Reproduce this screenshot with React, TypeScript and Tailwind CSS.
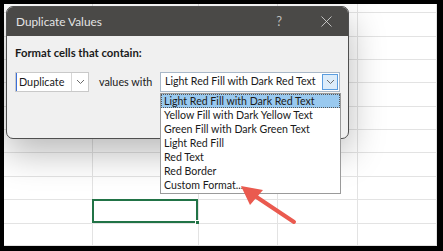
import { X } from 'lucide-react'

const colWidths = [89, 106, 79, 80, 79]
const rowHeights = [9, 24, 23, 23, 24, 23, 23, 24, 23, 24, 22]

const listItems = [
  'Light Red Fill with Dark Red Text',
  'Yellow Fill with Dark Yellow Text',
  'Green Fill with Dark Green Text',
  'Light Red Fill',
  'Red Text',
  'Red Border',
  'Custom Format...',
]

function Chevron() {
  return (
    <svg width="9" height="6" viewBox="0 0 9 6" fill="none">
      <polyline points="1,1 4.5,4.5 8,1" stroke="#6b6b6b" strokeWidth="1" />
    </svg>
  )
}

function Sheet() {
  return (
    <div className="flex h-full w-full flex-col bg-white">
      {rowHeights.map((h, r) => (
        <div key={r} className="flex shrink-0" style={{ height: h }}>
          {colWidths.map((w, c) => (
            <div
              key={c}
              className="relative shrink-0 border-r border-b border-[#e3e3e3]"
              style={{ width: w }}
            >
              {r === 9 && c === 1 && (
                <div className="absolute top-[-1px] right-0 bottom-0 left-[-1px] border-2 border-[#217346]">
                  <div className="absolute right-[-4px] bottom-[-4px] h-[5px] w-[5px] border border-white bg-[#217346]" />
                </div>
              )}
            </div>
          ))}
        </div>
      ))}
    </div>
  )
}

export default function App() {
  return (
    <div className="relative h-[251px] w-[443px] overflow-hidden bg-black pt-[4px] pr-[6px] pb-[5px] pl-[4px] font-['Lato',sans-serif] whitespace-nowrap">
      <Sheet />

      {/* dialog */}
      <div className="absolute top-[6px] left-[6px] flex h-[133px] w-[343px] flex-col overflow-hidden rounded-[7px] border border-[#4f4f4f] bg-[#f0f0f0] shadow-[0_14px_36px_rgba(0,0,0,0.28)]">
        <div className="flex h-[29px] shrink-0 items-center bg-[#4a4947] pr-[12px] pl-[9px] text-[#e4e4e4]">
          <span className="text-[11.8px] leading-none">Duplicate Values</span>
          <span className="ml-auto text-[13px] leading-none text-[#bdbdbd]">?</span>
          <X className="ml-[35px]" size={19} strokeWidth={1} color="#e0e0e0" />
        </div>

        <div className="flex flex-col px-[8px] pt-[10px]">
          <div className="text-[11.3px] font-bold leading-[14px] text-[#1a1a1a]">
            Format cells that contain:
          </div>

          <div className="mt-[12px] flex items-center">
            <div className="flex h-[20px] w-[74px] items-stretch border border-[#c9c9c9] bg-white">
              <div className="flex flex-1 items-center border-l border-[#3c6fd8] pl-[2px] text-[10.8px] text-[#1a1a1a]">
                Duplicate
              </div>
              <div className="flex w-[17px] items-center justify-center border-l border-[#d6d6d6]">
                <Chevron />
              </div>
            </div>
            <span className="ml-[10px] text-[10.8px] text-[#1a1a1a]">values with</span>
            <div className="ml-auto flex h-[20px] w-[180px] items-stretch border border-[#a9b8c8] bg-white">
              <div className="flex flex-1 items-center pl-[4px] text-[10.6px] text-[#1a1a1a]">
                Light Red Fill with Dark Red Text
              </div>
              <div className="m-px flex w-[16px] items-center justify-center border border-[#5a9de0] bg-[#dcecfa]">
                <Chevron />
              </div>
            </div>
          </div>
        </div>
      </div>

      {/* open dropdown list */}
      <div className="absolute top-[93px] left-[160px] flex w-[181px] flex-col border border-[#9a9a9a] bg-white pb-[1px]">
        {listItems.map((item, i) => (
          <div
            key={item}
            className={
              i === 0
                ? 'h-[14px] border border-dotted border-[#555] bg-[#99c9ef] pl-[2px] text-[10.6px] leading-[12px] text-[#1a1a1a]'
                : 'h-[14px] pl-[3px] text-[10.6px] leading-[14px] text-[#1a1a1a]'
            }
          >
            {item}
          </div>
        ))}
      </div>

      {/* red arrow */}
      <svg className="pointer-events-none absolute inset-0" width="443" height="251" viewBox="0 0 443 251">
        <line x1="294" y1="222" x2="252" y2="194" stroke="#ea5a4f" strokeWidth="4" strokeLinecap="round" />
        <polygon points="241,186 263,190 250,205" fill="#ea5a4f" />
      </svg>
    </div>
  )
}
